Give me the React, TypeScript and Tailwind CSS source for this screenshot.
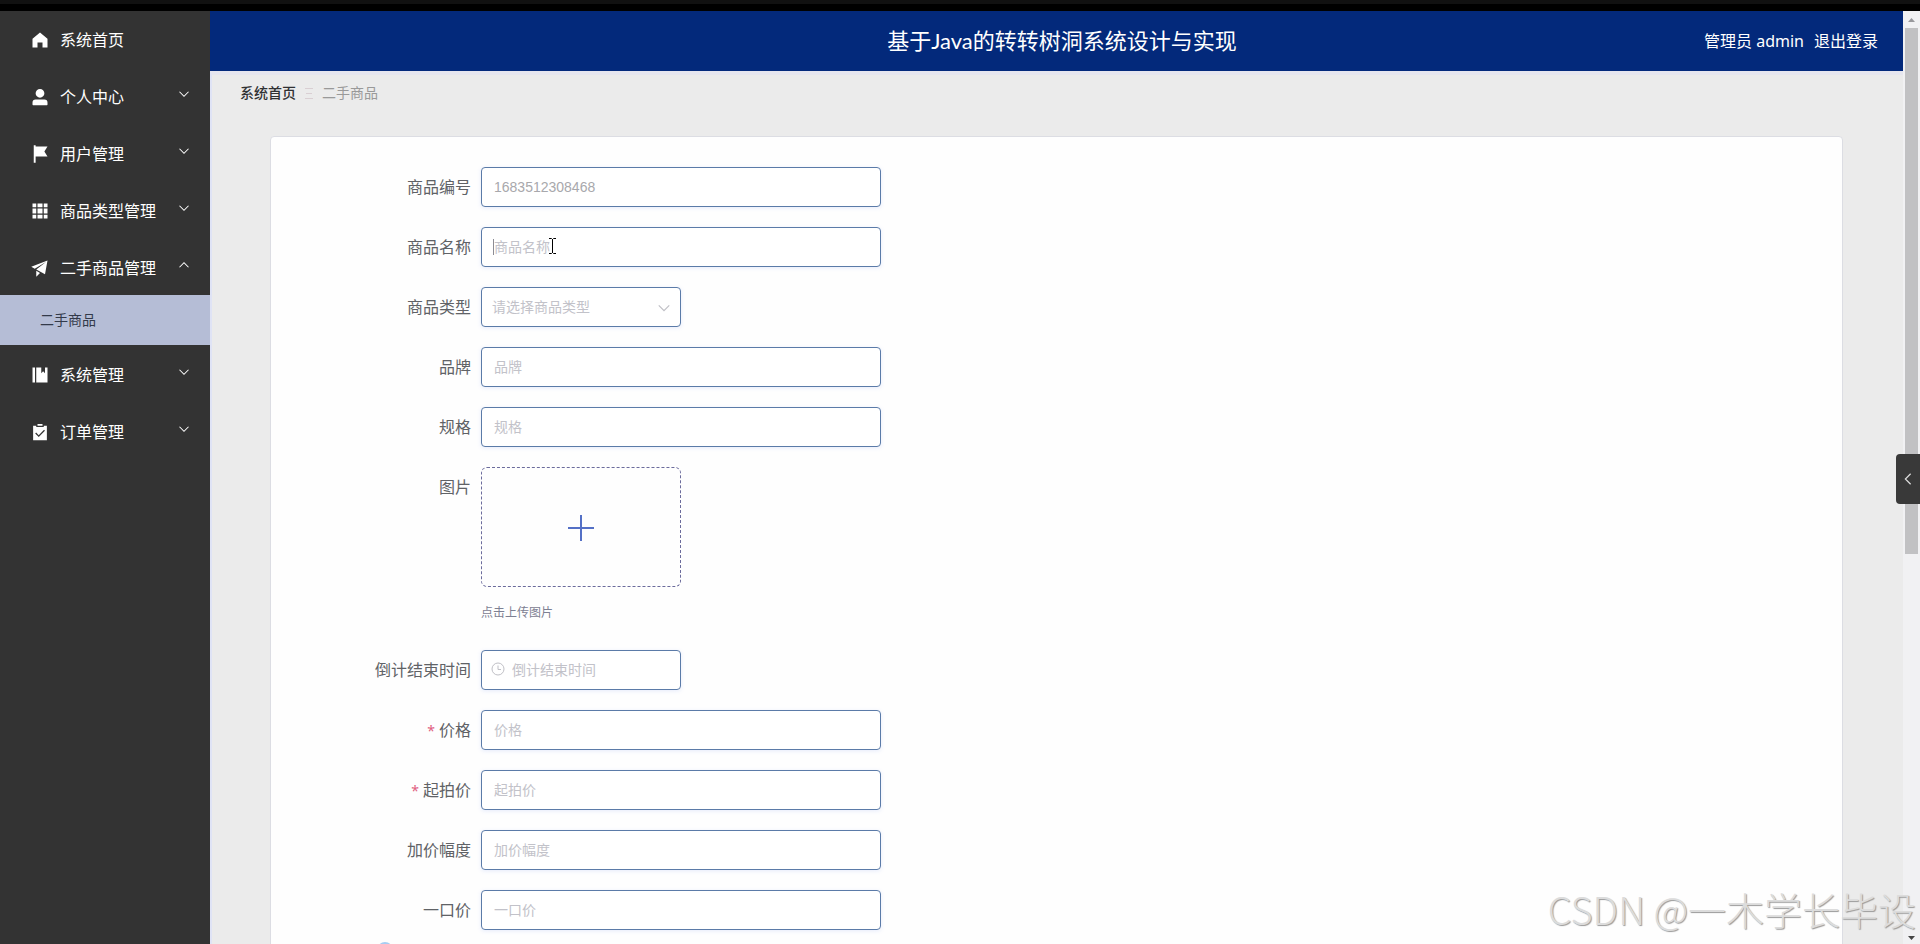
import { useState } from "react";

const ICONS = {
  home: "M512 128 128 447.936V896h255.936V640H640v256h255.936V447.936z",
  user: "M288 320a224 224 0 1 0 448 0 224 224 0 1 0-448 0zm544 608H160a32 32 0 0 1-32-32v-96a160 160 0 0 1 160-160h448a160 160 0 0 1 160 160v96a32 32 0 0 1-32 32z",
  flag: "M288 128h608L736 384l160 256H288v320h-96V64h96v64z",
  grid: "M640 384v256H384V384h256zm64 0h192v256H704V384zm-64 512H384V704h256v192zm64 0V704h192v192H704zm-64-768v192H384V128h256zm64 0h192v192H704V128zM320 384v256H128V384h192zm0 512H128V704h192v192zm0-768v192H128V128h192z",
  promotion: "m64 448 832-320-128 704-446.08-243.328L832 192 242.816 545.536 64 448zm256 512V657.024L512 768 320 960z",
  management: "M576 128v288l96-96 96 96V128h128v768H320V128h256zm-448 0h128v768H128V128z",
  checked: "M704 192h160v736H160V192h160.064v64H704v-64zM311.616 537.28l-45.312 45.248L447.36 763.52l316.8-316.8-45.312-45.184L447.36 673.024 311.616 537.28zM384 192V96h256v96H384z",
};

type MenuItem = {
  label: string;
  icon: keyof typeof ICONS;
  children?: string[];
};

const MENU: MenuItem[] = [
  { label: "系统首页", icon: "home" },
  { label: "个人中心", icon: "user", children: ["修改密码", "个人信息"] },
  { label: "用户管理", icon: "flag", children: ["用户"] },
  { label: "商品类型管理", icon: "grid", children: ["商品类型"] },
  { label: "二手商品管理", icon: "promotion", children: ["二手商品"] },
  { label: "系统管理", icon: "management", children: ["轮播图管理"] },
  { label: "订单管理", icon: "checked", children: ["订单"] },
];

type Field = {
  id: string;
  label: string;
  kind?: "text" | "select" | "upload" | "time";
  required?: boolean;
  value?: string;
  focus?: boolean;
};

const FIELDS: Field[] = [
  { id: "bianhao", label: "商品编号", value: "1683512308468" },
  { id: "mingcheng", label: "商品名称", focus: true },
  { id: "leixing", label: "商品类型", kind: "select" },
  { id: "pinpai", label: "品牌" },
  { id: "guige", label: "规格" },
  { id: "tupian", label: "图片", kind: "upload" },
  { id: "jieshu", label: "倒计结束时间", kind: "time" },
  { id: "jiage", label: "价格", required: true },
  { id: "qipai", label: "起拍价", required: true },
  { id: "fudu", label: "加价幅度" },
  { id: "yikou", label: "一口价" },
];

const BOX =
  "h-10 rounded border border-[#5b7ba8] bg-white font-['Liberation_Sans','Noto_Sans_CJK_SC',sans-serif] text-sm text-[#a8a8ac] placeholder:text-[#c2c2c9] shadow-[0_1px_4px_rgba(120,150,240,0.18)] outline-none";

function Chevron({ className, d = "M2 5l6 6 6-6" }: { className: string; d?: string }) {
  return (
    <svg viewBox="0 0 16 16" className={className} fill="none" stroke="currentColor" aria-hidden="true">
      <path d={d} strokeWidth="1.4" />
    </svg>
  );
}

function Sidebar() {
  const [open, setOpen] = useState("二手商品管理");

  return (
    <nav className="flex w-[210px] shrink-0 flex-col gap-px bg-[#333333] text-white">
      {MENU.map((item) => {
        const isOpen = open === item.label;
        return (
          <div key={item.label}>
            <button
              onClick={() => setOpen(isOpen ? "" : item.label)}
              className="flex h-14 w-full items-center pt-0.5 pr-5 pl-[30px] text-left text-base"
            >
              <svg viewBox="0 0 1024 1024" className="mr-2.5 size-5 shrink-0" fill="currentColor" aria-hidden="true">
                <path d={ICONS[item.icon]} />
              </svg>
              <span className="flex-1 whitespace-nowrap">{item.label}</span>
              {item.children && (
                <Chevron className="mb-1.5 size-3 shrink-0" d={isOpen ? "M2 11l6-6 6 6" : undefined} />
              )}
            </button>
            {isOpen &&
              item.children?.map((child) => (
                <a
                  key={child}
                  href="#"
                  className="flex h-[50px] items-center bg-[#b5bdd6] pl-10 text-sm text-[#333a4a]"
                >
                  {child}
                </a>
              ))}
          </div>
        );
      })}
    </nav>
  );
}

function Control({ field }: { field: Field }) {
  if (field.kind === "select") {
    return (
      <div className="relative w-[200px]">
        <select id={field.id} defaultValue="" className={`${BOX} w-full appearance-none pr-8 pl-2.5 text-[#c2c2c9]`}>
          <option value="">请选择商品类型</option>
        </select>
        <Chevron className="pointer-events-none absolute top-3.5 right-2.5 size-3.5 text-[#c0c0c6]" />
      </div>
    );
  }

  if (field.kind === "upload") {
    return (
      <div>
        <button
          id={field.id}
          type="button"
          aria-label="上传图片"
          className="flex h-[120px] w-[200px] items-center justify-center rounded-md border border-dashed border-[#6b6b9c] pt-0.5 text-[#5470c6]"
        >
          <svg viewBox="0 0 28 28" className="size-7" stroke="currentColor" strokeWidth="2" aria-hidden="true">
            <path d="M14 1v26M1 14h26" />
          </svg>
        </button>
        <p className="mt-4 mb-[7px] text-xs leading-5 text-[#7d8092]">点击上传图片</p>
      </div>
    );
  }

  if (field.kind === "time") {
    return (
      <div className="relative w-[200px]">
        <input id={field.id} placeholder={field.label} className={`${BOX} w-full pr-2 pl-[30px]`} />
        <svg
          viewBox="0 0 14 14"
          className="absolute top-3 left-2.5 size-3.5 text-[#c0c0c6]"
          fill="none"
          stroke="currentColor"
          aria-hidden="true"
        >
          <circle cx="7" cy="7" r="6" />
          <path d="M7 3.5V7.5H10" />
        </svg>
      </div>
    );
  }

  return (
    <div className="relative w-[400px]">
      <input
        id={field.id}
        placeholder={field.label}
        defaultValue={field.value}
        readOnly={Boolean(field.value)}
        className={`${BOX} w-full px-3`}
      />
      {field.focus && (
        <>
          <span className="absolute top-3 left-3 h-4 w-px bg-[#8c8c94]" />
          {/* text cursor */}
          <svg
            viewBox="0 0 7 16"
            className="absolute top-[11px] left-[68px] h-4 w-[7px] text-black"
            fill="none"
            stroke="currentColor"
            aria-hidden="true"
          >
            <path d="M0 .5h2.500l1 1 1-1H7M3.500 1v14M0 15.500h2.500l1-1 1 1H7" />
          </svg>
        </>
      )}
    </div>
  );
}

function Scrollbar() {
  return (
    <div className="flex w-[17px] shrink-0 flex-col items-center justify-between bg-[#f1f1f3] pb-px" aria-hidden="true">
      <div className="flex min-h-0 w-full flex-1 flex-col items-center">
        <svg viewBox="0 0 17 17" className="size-[17px] shrink-0 text-[#98989c]" fill="currentColor">
          <path d="M5 11l3.500-4 3.500 4z" />
        </svg>
        <div className="h-[57%] w-[13px] bg-[#c1c1c3]" />
      </div>
      <svg viewBox="0 0 17 9" className="h-[9px] w-[17px] shrink-0 text-[#444444]" fill="currentColor">
        <path d="M5 2h7l-3.500 4z" />
      </svg>
    </div>
  );
}

export default function App() {
  return (
    <div className="relative flex h-screen flex-col overflow-hidden bg-[#ebebeb] font-['Noto_Sans','Noto_Sans_CJK_SC',sans-serif]">
      <div className="h-[11px] shrink-0 border-t-4 border-[#111111] bg-black" />

      <div className="flex min-h-0 flex-1">
        <Sidebar />

        <div className="flex min-w-0 flex-1 flex-col">
          <header className="grid h-[60px] shrink-0 grid-cols-[1fr_auto_1fr] items-center bg-[#03297b] pr-[25px] pl-9 text-white">
            <h1 className="col-start-2 font-['Lato','Noto_Sans_CJK_SC',sans-serif] text-[22px] leading-8">
              基于Java的转转树洞系统设计与实现
            </h1>
            <div className="flex justify-end gap-2.5 text-base">
              <span>管理员 admin</span>
              <button>退出登录</button>
            </div>
          </header>

          <main className="min-h-0 flex-1 overflow-hidden border-t-4 border-l-2 border-t-[#e6e6ef] border-l-[#dfe3f5]">
            <nav className="flex h-9 items-center pl-7 text-sm">
              <a href="#" className="font-medium text-[#303133]">
                系统首页
              </a>
              <svg viewBox="0 0 8 12" className="mx-[9px] h-3 w-2" stroke="#d9cfd3" aria-hidden="true">
                <path d="M0 1.500h8M1 6.500h6M0 11.500h8" />
              </svg>
              <span className="text-[#999999]">二手商品</span>
            </nav>

            <form className="mt-[25px] mr-[60px] ml-[58px] flex flex-col gap-5 rounded border border-[#dcdde3] bg-[#fefefe] pt-[30px] pb-10 pl-[60px]">
              {FIELDS.map((field) => (
                <div key={field.id} className="flex items-start gap-2.5">
                  <label htmlFor={field.id} className="w-[140px] shrink-0 text-right text-base leading-10 text-[#606266]">
                    {field.required && <span className="mr-1 text-sm text-[#e0607e]">*</span>}
                    {field.label}
                  </label>
                  <Control field={field} />
                </div>
              ))}
              <span className="-mt-2 ml-[46px] size-4 rounded-full bg-[#a6cdf2]" />
            </form>
          </main>
        </div>

        <Scrollbar />
      </div>

      {/* Drawer handle */}
      <button
        aria-label="展开"
        className="absolute top-[454px] right-0 flex h-[50px] w-6 items-center justify-center rounded-l-sm bg-[#393939] text-[#dddddd]"
      >
        <Chevron className="size-3.5" d="M11 2L5 8l6 6" />
      </button>

      <div className="pointer-events-none absolute right-1 bottom-2 text-[38px] leading-[54px] font-light whitespace-nowrap text-[#dcdcdc] [text-shadow:1px_1px_1px_#9a9a9a] font-['Noto_Sans_CJK_SC',sans-serif]">
        CSDN @一木学长毕设
      </div>
    </div>
  );
}
